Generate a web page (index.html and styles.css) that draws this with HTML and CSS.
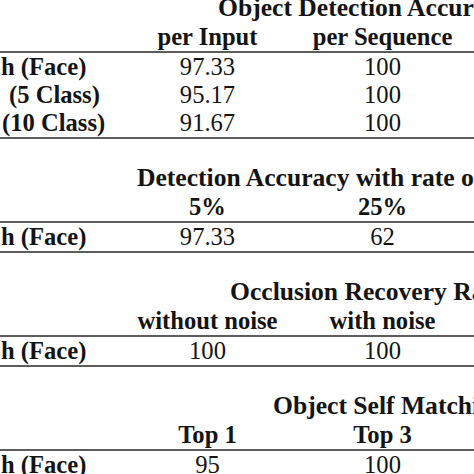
FILE: index.html
```html
<!DOCTYPE html>
<html>
<head>
<meta charset="utf-8">
<link rel="stylesheet" href="styles.css">
</head>
<body>
<div class="page">
  <section class="tbl first">
    <div class="title t-det">Object Detection Accur</div>
    <div class="head row"><div class="lab"></div><div class="col">per Input</div><div class="col">per Sequence</div></div>
    <div class="body">
      <div class="row"><div class="lab l-face">h (Face)</div><div class="col">97.33</div><div class="col">100</div></div>
      <div class="row"><div class="lab l-five">(5 Class)</div><div class="col">95.17</div><div class="col">100</div></div>
      <div class="row"><div class="lab l-ten">(10 Class)</div><div class="col">91.67</div><div class="col">100</div></div>
    </div>
  </section>
  <section class="tbl">
    <div class="title t-rate">Detection Accuracy with rate o</div>
    <div class="head row"><div class="lab"></div><div class="col">5%</div><div class="col">25%</div></div>
    <div class="body">
      <div class="row"><div class="lab l-face">h (Face)</div><div class="col">97.33</div><div class="col">62</div></div>
    </div>
  </section>
  <section class="tbl">
    <div class="title t-occ">Occlusion Recovery Ra</div>
    <div class="head row"><div class="lab"></div><div class="col">without noise</div><div class="col">with noise</div></div>
    <div class="body">
      <div class="row"><div class="lab l-face">h (Face)</div><div class="col">100</div><div class="col">100</div></div>
    </div>
  </section>
  <section class="tbl">
    <div class="title t-self">Object Self Matchi</div>
    <div class="head row"><div class="lab"></div><div class="col">Top 1</div><div class="col">Top 3</div></div>
    <div class="body">
      <div class="row"><div class="lab l-face">h (Face)</div><div class="col">95</div><div class="col">100</div></div>
    </div>
  </section>
</div>
</body>
</html>
```
FILE: styles.css
```css
html, body {
  margin: 0;
  padding: 0;
  background: #ffffff;
  overflow: hidden;
}
.page {
  width: 474px;
  height: 474px;
  overflow: hidden;
  font-family: "Liberation Serif", "Times New Roman", serif;
  font-size: 24.6px;
  color: #141414;
}
.tbl {
  margin-top: 25px;
}
.tbl.first {
  margin-top: -6px;
}
.title {
  height: 28px;
  line-height: 28px;
  font-size: 25.6px;
  font-weight: bold;
  white-space: nowrap;
}
.t-det { padding-left: 218px; }
.t-rate { padding-left: 137px; }
.t-occ { padding-left: 230px; }
.t-self { padding-left: 273px; }
.row {
  display: flex;
  white-space: nowrap;
}
.head {
  line-height: 29px;
  font-weight: bold;
  border-bottom: 2px solid #5c5c5c;
}
.body {
  border-bottom: 2px solid #5c5c5c;
}
.body .row {
  line-height: 28px;
}
.lab {
  width: 120px;
  flex: none;
  font-weight: bold;
}
.l-face { padding-left: 1px; width: 119px; }
.l-five { padding-left: 9px; width: 111px; }
.l-ten { padding-left: 2px; width: 118px; }
.col {
  width: 175px;
  flex: none;
  text-align: center;
}
```
